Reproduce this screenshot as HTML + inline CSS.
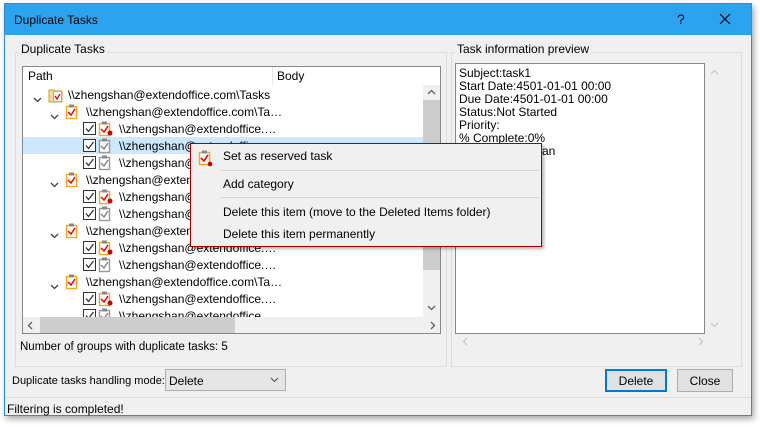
<!DOCTYPE html>
<html><head><meta charset="utf-8"><style>
*{margin:0;padding:0;box-sizing:border-box}
body{width:760px;height:427px;background:#fff;font-family:"Liberation Sans",sans-serif;font-size:12px;color:#000;position:relative;overflow:hidden}
.a{position:absolute;white-space:nowrap}
.win{position:absolute;left:4px;top:3px;width:748px;height:413px;background:#f0f0f0;border:1px solid #2b8fd8;box-shadow:2px 3px 6px rgba(0,0,0,.35)}
.title{position:absolute;left:0;top:0;width:746px;height:31px;background:#2ba3ee}
.grp{position:absolute;border:1px solid #dcdcdc}
.lab{position:absolute;background:#f0f0f0;padding:0 2px}
.cb{position:absolute;width:13px;height:13px;border:1px solid #333;background:#fff}
.cb svg{position:absolute;left:0;top:0}
</style></head><body>
<div class="win">
<div class="title"></div>
<div class="a" style="left:9px;top:9px;font-size:12px">Duplicate Tasks</div>
<div class="a" style="left:672px;top:7px;font-size:14px">?</div>
<svg class="a" style="left:714px;top:9px" width="12" height="12"><path d="M1 1L11 11M11 1L1 11" stroke="#000" stroke-width="1.2"/></svg>

<div class="grp" style="left:10px;top:48px;width:432px;height:315px"></div>
<div class="lab a" style="left:14px;top:38px">Duplicate Tasks</div>
<div class="grp" style="left:446px;top:48px;width:291px;height:315px"></div>
<div class="lab a" style="left:450px;top:38px">Task information preview</div>
</div>

<div class="a" style="left:22px;top:66px;width:419px;height:268px;background:#fff;border:1px solid #828790;overflow:hidden">
 <div class="a" style="left:5px;top:2px">Path</div>
 <div class="a" style="left:249px;top:0;width:1px;height:18px;background:#e5e5e5"></div>
 <div class="a" style="left:254px;top:2px">Body</div>
 <div class="a" style="left:0;top:70px;width:400px;height:17px;background:#cce8ff"></div>
 <div id="rows"></div>
 <div class="a" style="left:400px;top:18px;width:17px;height:232px;background:#f0f0f0"></div>
 <div class="a" style="left:400px;top:33px;width:17px;height:170px;background:#cdcdcd"></div>
 <svg class="a" style="left:404px;top:22px" width="9" height="6"><path d="M1 5L4.5 1.5L8 5" stroke="#606060" fill="none" stroke-width="1.3"/></svg>
 <svg class="a" style="left:404px;top:238px" width="9" height="6"><path d="M1 1L4.5 4.5L8 1" stroke="#606060" fill="none" stroke-width="1.3"/></svg>
 <div class="a" style="left:0;top:250px;width:417px;height:16px;background:#f0f0f0"></div>
 <div class="a" style="left:17px;top:250px;width:195px;height:16px;background:#cdcdcd"></div>
 <svg class="a" style="left:4px;top:254px" width="6" height="9"><path d="M5 1L1.5 4.5L5 8" stroke="#606060" fill="none" stroke-width="1.3"/></svg>
 <svg class="a" style="left:407px;top:254px" width="6" height="9"><path d="M1 1L4.5 4.5L1 8" stroke="#606060" fill="none" stroke-width="1.3"/></svg>
</div>

<div class="a" style="left:455px;top:63px;width:250px;height:271px;background:#fff;border:1px solid #828790;line-height:13px;padding:3px 0 0 3px">Subject:task1<br>Start Date:4501-01-01 00:00<br>Due Date:4501-01-01 00:00<br>Status:Not Started<br>Priority:<br>% Complete:0%</div>
<div class="a" style="left:542px;top:144px">an</div>
<svg class="a" style="left:710px;top:69px" width="9" height="6"><path d="M1 5L4.5 1.5L8 5" stroke="#c8c8c8" fill="none" stroke-width="1.3"/></svg>
<svg class="a" style="left:710px;top:322px" width="9" height="6"><path d="M1 1L4.5 4.5L8 1" stroke="#c8c8c8" fill="none" stroke-width="1.3"/></svg>
<svg class="a" style="left:462px;top:337px" width="6" height="9"><path d="M5 1L1.5 4.5L5 8" stroke="#c8c8c8" fill="none" stroke-width="1.3"/></svg>
<svg class="a" style="left:698px;top:337px" width="6" height="9"><path d="M1 1L4.5 4.5L1 8" stroke="#c8c8c8" fill="none" stroke-width="1.3"/></svg>

<div class="a" style="left:20px;top:341px;font-size:11.5px">Number of groups with duplicate tasks: 5</div>
<div class="a" style="left:12px;top:375px;font-size:11px">Duplicate tasks handling mode:</div>
<div class="a" style="left:165px;top:369px;width:121px;height:22px;background:#e5e5e5;border:1px solid #adadad;padding:4px 0 0 3px">Delete</div>
<svg class="a" style="left:270px;top:377px" width="9" height="6"><path d="M1 1L4.5 4.5L8 1" stroke="#555" fill="none" stroke-width="1.1"/></svg>
<div class="a" style="left:605px;top:369px;width:62px;height:23px;background:#e1e1e1;border:2px solid #0078d7;text-align:center;padding-top:3px">Delete</div>
<div class="a" style="left:677px;top:369px;width:56px;height:23px;background:#e1e1e1;border:1px solid #adadad;text-align:center;padding-top:4px">Close</div>
<div class="a" style="left:5px;top:397px;width:746px;height:1px;background:#dcdcdc"></div>
<div class="a" style="left:7px;top:402px">Filtering is completed!</div>

<div class="a" style="left:190px;top:143px;width:352px;height:104px;background:#f0f0f0;border:1px solid #a00000;box-shadow:2px 2px 3px rgba(0,0,0,.3)">
 <svg class="a" style="left:7px;top:5px" width="16" height="18"><rect x="1.5" y="3.5" width="10" height="12" fill="#fff" stroke="#f5a623" stroke-width="1.5"/><rect x="4" y="1.5" width="5" height="3" fill="#888"/><path d="M3 9L6 12L10 6" stroke="#e00" stroke-width="1.6" fill="none"/><circle cx="12" cy="15" r="2.3" fill="#c00"/></svg>
 <div class="a" style="left:32px;top:5px">Set as reserved task</div>
 <div class="a" style="left:30px;top:26px;width:318px;height:1px;background:#d5d5d5"></div>
 <div class="a" style="left:32px;top:33px">Add category</div>
 <div class="a" style="left:30px;top:53px;width:318px;height:1px;background:#d5d5d5"></div>
 <div class="a" style="left:32px;top:61px">Delete this item (move to the Deleted Items folder)</div>
 <div class="a" style="left:32px;top:83px">Delete this item permanently</div>
</div>

<script>
var rows=[[0,'\\\\zhengshan@extendoffice.com\\Tasks'],[1,'\\\\zhengshan@extendoffice.com\\Ta…'],[2,'\\\\zhengshan@extendoffice.…',1],[2,'\\\\zhengshan@extendoffice.…',0],[2,'\\\\zhengshan@extendoffice.…',0],
[1,'\\\\zhengshan@extendoffice.com\\Ta…'],[2,'\\\\zhengshan@extendoffice.…',1],[2,'\\\\zhengshan@extendoffice.…',0],
[1,'\\\\zhengshan@extendoffice.com\\Ta…'],[2,'\\\\zhengshan@extendoffice.…',1],[2,'\\\\zhengshan@extendoffice.…',0],
[1,'\\\\zhengshan@extendoffice.com\\Ta…'],[2,'\\\\zhengshan@extendoffice.…',1],[2,'\\\\zhengshan@extendoffice.…',0]];
var h='';
var chev='<svg width="9" height="6"><path d="M1 1L4.5 4.5L8 1" stroke="#444" fill="none" stroke-width="1.3"/></svg>';
function clip(c){return '<svg width="14" height="17"><rect x="1.5" y="3.5" width="10" height="12" fill="#fff" stroke="'+c+'" stroke-width="1.4"/><rect x="4" y="1.5" width="5" height="3" fill="#888"/><path d="M3 9L6 12L10 6" stroke="'+(c=='#999'?'#888':'#e00')+'" stroke-width="1.5" fill="none"/></svg>';}
rows.forEach(function(r,i){var y=19+i*17,l=r[0];
 if(l==0){h+='<div class="a" style="left:10px;top:'+(y+6)+'px">'+chev+'</div><div class="a" style="left:25px;top:'+y+'px"><svg width="16" height="17"><path d="M1 4h5l1 1h7v11H1z" fill="#f7dc8b" stroke="#c9a23a"/><rect x="5.5" y="5.5" width="8" height="10" fill="#fff" stroke="#f5a623"/><path d="M7 10L9 13L12 8" stroke="#e00" stroke-width="1.4" fill="none"/></svg></div><div class="a" style="left:45px;top:'+(y+2)+'px">'+r[1]+'</div>';}
 else if(l==1){h+='<div class="a" style="left:27px;top:'+(y+6)+'px">'+chev+'</div><div class="a" style="left:42px;top:'+y+'px">'+clip('#f5a623')+'</div><div class="a" style="left:63px;top:'+(y+2)+'px">'+r[1]+'</div>';}
 else{h+='<div class="cb" style="left:60px;top:'+(y+2)+'px"><svg width="11" height="11"><path d="M2 5.5L4.5 8.5L9.5 2" stroke="#333" stroke-width="1.3" fill="none"/></svg></div><div class="a" style="left:75px;top:'+y+'px">'+clip(r[2]?'#f5a623':'#999')+(r[2]?'<svg class="a" style="left:9px;top:10px" width="6" height="6"><circle cx="3" cy="3" r="2.5" fill="#c00"/></svg>':'')+'</div><div class="a" style="left:96px;top:'+(y+2)+'px">'+r[1]+'</div>';}
});
document.getElementById('rows').innerHTML=h;
</script>
</body></html>
